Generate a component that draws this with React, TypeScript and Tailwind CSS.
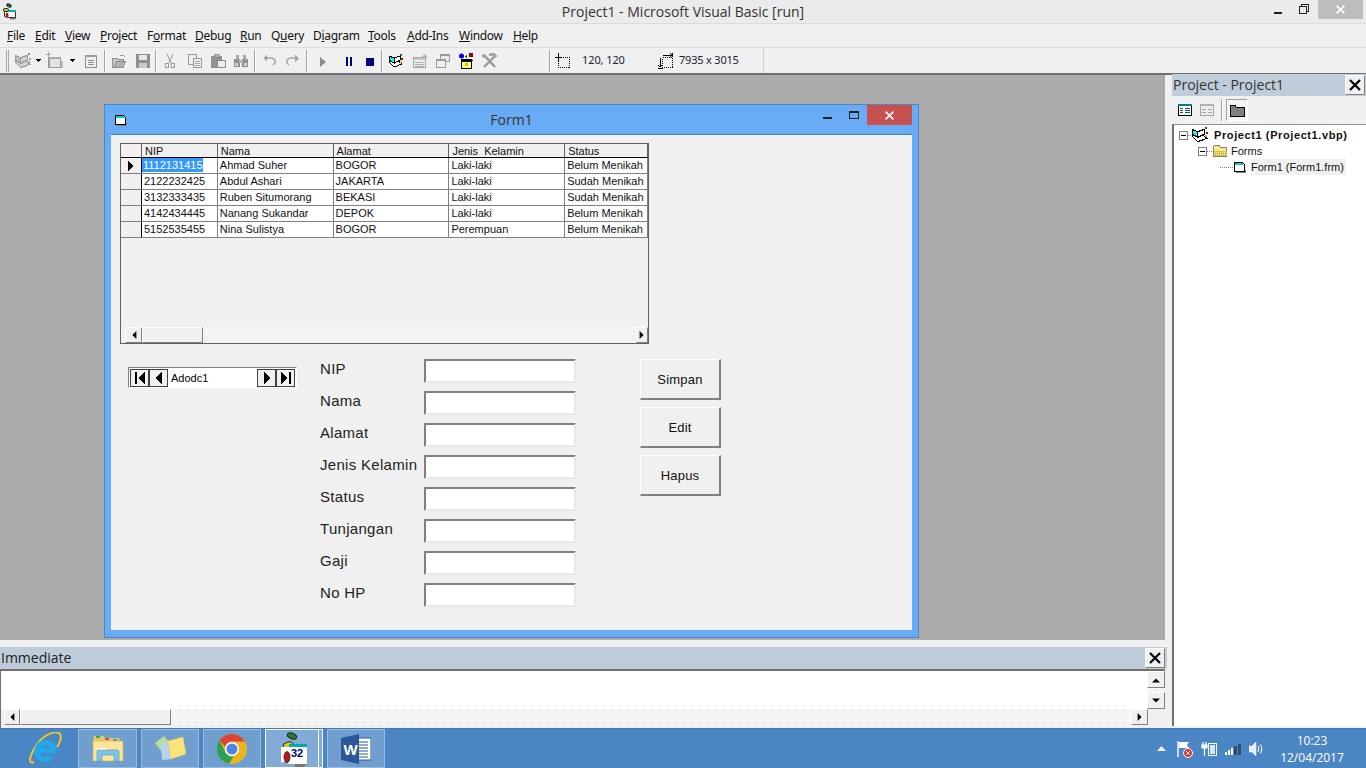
import type { ReactNode } from "react";

const menus = [
  { pre: "", u: "F", post: "ile", w: "w-[28px]" },
  { pre: "", u: "E", post: "dit", w: "w-[30px]" },
  { pre: "", u: "V", post: "iew", w: "w-[35px]" },
  { pre: "", u: "P", post: "roject", w: "w-[47px]" },
  { pre: "F", u: "o", post: "rmat", w: "w-[48px]" },
  { pre: "", u: "D", post: "ebug", w: "w-[45px]" },
  { pre: "", u: "R", post: "un", w: "w-[31px]" },
  { pre: "Q", u: "u", post: "ery", w: "w-[42px]" },
  { pre: "D", u: "i", post: "agram", w: "w-[55px]" },
  { pre: "", u: "T", post: "ools", w: "w-[39px]" },
  { pre: "", u: "A", post: "dd-Ins", w: "w-[52px]" },
  { pre: "", u: "W", post: "indow", w: "w-[54px]" },
  { pre: "", u: "H", post: "elp", w: "w-[40px]" },
];

const rows = [
  ["1112131415", "Ahmad Suher", "BOGOR", "Laki-laki", "Belum Menikah"],
  ["2122232425", "Abdul Ashari", "JAKARTA", "Laki-laki", "Sudah Menikah"],
  ["3132333435", "Ruben Situmorang", "BEKASI", "Laki-laki", "Sudah Menikah"],
  ["4142434445", "Nanang Sukandar", "DEPOK", "Laki-laki", "Belum Menikah"],
  ["5152535455", "Nina Sulistya", "BOGOR", "Perempuan", "Belum Menikah"],
];

const heads = ["NIP", "Nama", "Alamat", "Jenis  Kelamin", "Status"];
const colW = ["w-[76px]", "w-[116px]", "w-[116px]", "w-[116px]", "w-[83px]"];
const labels = ["NIP", "Nama", "Alamat", "Jenis Kelamin", "Status", "Tunjangan", "Gaji", "No HP"];

const raised = "border border-t-white border-l-white border-r-[#808080] border-b-[#808080] bg-[#f0f0f0]";
const dither = "bg-[repeating-conic-gradient(#ffffff_0_25%,#ececec_0_50%)] bg-[length:2px_2px]";

// --- small drawings ---
function Px({ children, size = 16, box = 16 }: { children: ReactNode; size?: number; box?: number }) {
  return (
    <svg width={size} height={size} viewBox={`0 0 ${box} ${box}`} className="block shrink-0" shapeRendering="crispEdges">
      {children}
    </svg>
  );
}

function ProjectIcon({ gray = false, size = 16 }: { gray?: boolean; size?: number }) {
  const k = gray ? "#9a9a9a" : "#000";
  return (
    <Px size={size}>
      <path d="M1 9l5 5 8-3-5-4z" fill={gray ? "#d0d0d0" : "#fff"} stroke={k} />
      <path d="M1 3l5 2v5l-5-3z" fill={gray ? "#bdbdbd" : "#0ff"} stroke={k} />
      <path d="M6 5l6-2v4l-6 3z" fill={gray ? "#d0d0d0" : "#fff"} stroke={k} />
      <rect x="12" y="1" width="2" height="2" fill={gray ? "#8a8a8a" : "#008000"} />
      <rect x="13" y="5" width="2" height="2" fill={gray ? "#a0a0a0" : "#d00000"} />
      <rect x="12" y="8" width="2" height="2" fill={gray ? "#a0a0a0" : "#e0c000"} />
    </Px>
  );
}

// little copy of the VB "32" program icon, used in the window title
function AppIcon() {
  return (
    <svg width="16" height="17" viewBox="0 0 16 17" className="block shrink-0">
      <ellipse cx="7" cy="2.500" rx="2.500" ry="1.500" fill="#2f7a2f" stroke="#000" strokeWidth="0.8" transform="rotate(25 7 2.500)" />
      <ellipse cx="4" cy="7" rx="2.800" ry="1.600" fill="#d8d020" stroke="#000" strokeWidth="0.8" />
      <path d="M2.500 8.500h11v6h-8l-3-1z" fill="#fff" stroke="#000" strokeWidth="0.8" />
      <rect x="6" y="7" width="8" height="2" fill="#00b0b0" />
      <ellipse cx="5" cy="12" rx="1.500" ry="2.500" fill="#c01818" />
      <path d="M8 15h7l-2 1.500H8z" fill="#808080" />
    </svg>
  );
}

function AddFormIcon() {
  return (
    <Px size={18}>
      <rect x="3.500" y="4.500" width="10" height="9" fill="#e4e4e4" stroke="#9a9a9a" />
      <rect x="3" y="4" width="11" height="2" fill="#a9a9a9" />
      <path d="M3 0v4M1 2h4" stroke="#a5a5a5" />
      <path d="M14 8h2v6h-2z" fill="#bcbcbc" />
    </Px>
  );
}

function MenuEditorIcon() {
  return (
    <Px>
      <rect x="2.500" y="2.500" width="11" height="12" fill="#eeeeee" stroke="#8f8f8f" />
      <rect x="2" y="2" width="12" height="2" fill="#9b9b9b" />
      <path d="M5 7h6M5 9h6M5 11h6" stroke="#8f8f8f" />
    </Px>
  );
}

function OpenIcon() {
  return (
    <Px>
      <path d="M1 5h5l1 1h5v8H1z" fill="#c6c6c6" stroke="#8f8f8f" />
      <path d="M3 14l3-6h9l-3 6z" fill="#b0b0b0" stroke="#8f8f8f" />
      <path d="M9 3q3-2 5 1" fill="none" stroke="#9b9b9b" />
    </Px>
  );
}

function SaveIcon() {
  return (
    <Px>
      <rect x="1" y="1" width="14" height="14" fill="#8f8f8f" />
      <rect x="4" y="2" width="8" height="5" fill="#e9e9e9" />
      <rect x="4" y="10" width="8" height="5" fill="#c9c9c9" />
    </Px>
  );
}

function CutIcon() {
  return (
    <Px>
      <path d="M5 1l4 9M11 1l-4 9" stroke="#9a9a9a" fill="none" shapeRendering="auto" />
      <circle cx="5" cy="12.500" r="2" fill="none" stroke="#9a9a9a" />
      <circle cx="11" cy="12.500" r="2" fill="none" stroke="#9a9a9a" />
    </Px>
  );
}

function CopyIcon() {
  return (
    <Px>
      <rect x="1.500" y="1.500" width="8" height="10" fill="#efefef" stroke="#9a9a9a" />
      <rect x="6.500" y="5.500" width="8" height="9" fill="#efefef" stroke="#9a9a9a" />
      <path d="M8 8h5M8 10h5M8 12h5" stroke="#a8a8a8" />
    </Px>
  );
}

function PasteIcon() {
  return (
    <Px>
      <rect x="1" y="3" width="11" height="12" fill="#929292" />
      <rect x="4" y="1" width="5" height="3" fill="#b5b5b5" stroke="#808080" strokeWidth="0.6" />
      <rect x="7.500" y="7.500" width="8" height="7" fill="#efefef" stroke="#8a8a8a" />
    </Px>
  );
}

function FindIcon() {
  return (
    <Px>
      <rect x="1" y="6" width="6" height="8" fill="#8f8f8f" />
      <rect x="9" y="6" width="6" height="8" fill="#8f8f8f" />
      <rect x="3" y="2" width="3" height="5" fill="#a5a5a5" />
      <rect x="10" y="2" width="3" height="5" fill="#a5a5a5" />
      <rect x="6" y="7" width="4" height="3" fill="#b5b5b5" />
      <rect x="2" y="10" width="3" height="3" fill="#d4d4d4" />
      <rect x="11" y="10" width="3" height="3" fill="#d4d4d4" />
    </Px>
  );
}

function UndoIcon({ flip = false }: { flip?: boolean }) {
  return (
    <Px>
      <g transform={flip ? "translate(16 0) scale(-1 1)" : undefined}>
        <path d="M4 5h7l3 2v3l-2 2" fill="none" stroke="#a5a5a5" strokeWidth="1.500" shapeRendering="auto" />
        <path d="M2 5l4-3v7z" fill="#a5a5a5" />
      </g>
    </Px>
  );
}

function PropsIcon() {
  return (
    <Px>
      <rect x="1.500" y="4.500" width="12" height="10" fill="#eeeeee" stroke="#a5a5a5" />
      <rect x="2" y="5" width="11" height="2" fill="#c6c6c6" />
      <path d="M3 9h9M3 11h9M3 13h9" stroke="#b0b0b0" />
      <path d="M10 3l4-2 1 4-3 1z" fill="#b5b5b5" />
    </Px>
  );
}

function LayoutIcon() {
  return (
    <Px>
      <rect x="5.500" y="1.500" width="9" height="7" fill="#e9e9e9" stroke="#9a9a9a" />
      <rect x="5" y="1" width="10" height="2" fill="#9a9a9a" />
      <rect x="1.500" y="6.500" width="9" height="8" fill="#f0f0f0" stroke="#9a9a9a" />
      <rect x="1" y="6" width="10" height="2" fill="#9a9a9a" />
    </Px>
  );
}

function BrowserIcon() {
  return (
    <Px>
      <circle cx="3.500" cy="3" r="2.500" fill="#0000e0" shapeRendering="auto" />
      <rect x="11" y="0" width="4" height="4" fill="#a00000" />
      <path d="M6 3l3-1v3z" fill="#006000" />
      <path d="M2 7l4 2h8l1-2-2-1H4z" fill="#000" />
      <rect x="3.500" y="8.500" width="10" height="7" fill="#ffff80" stroke="#000" />
      <path d="M7 10h3v3H7z" fill="#d8c000" />
    </Px>
  );
}

function ToolsIcon() {
  return (
    <Px>
      <path d="M3 2l11 12" stroke="#9a9a9a" strokeWidth="2.400" shapeRendering="auto" />
      <path d="M13 4L3 14" stroke="#9a9a9a" strokeWidth="2.400" shapeRendering="auto" />
      <path d="M8 0h5l3 3-2 3-3-3H8z" fill="#a5a5a5" />
      <path d="M0 3l3-3 2 3-2 2z" fill="#a5a5a5" />
    </Px>
  );
}

function PositionIcon() {
  return (
    <Px>
      <path d="M3 0v8M0 4h7" stroke="#000" />
      <rect x="3.500" y="4.500" width="11" height="10" fill="none" stroke="#000" strokeDasharray="1 1" />
    </Px>
  );
}

function SizeIcon() {
  return (
    <Px>
      <rect x="4.500" y="4.500" width="10" height="10" fill="none" stroke="#000" strokeDasharray="1 1" />
      <path d="M5 2h9M12 0l2 2-2 2M14 0v4" stroke="#000" fill="none" />
      <path d="M2 5v9M0 12l2 2 2-2M0 15h5" stroke="#000" fill="none" />
    </Px>
  );
}

function SmallFormIcon() {
  return (
    <Px size={14} box={14}>
      <rect x="3" y="10" width="10" height="3" fill="#808080" />
      <path d="M1.500 2.500h8l2 2v7h-10z" fill="#fff" stroke="#000" />
      <rect x="2" y="3" width="8" height="2" fill="#00d0d0" />
    </Px>
  );
}

function FolderIcon() {
  return (
    <Px>
      <path d="M1 4l2-2h4l1 2h6v9H1z" fill="#ffe98a" stroke="#808080" />
      <path d="M1.500 8h13v5h-13z" fill="#d8c050" />
      <path d="M2 9h12M2 11h12" stroke="#fff6b0" strokeDasharray="1 1" />
    </Px>
  );
}

function Arrow({ dir, size = 5 }: { dir: "l" | "r" | "u" | "d"; size?: number }) {
  const d = { l: "M8 0v10L3 5z", r: "M2 0v10l5-5z", u: "M0 8h10L5 3z", d: "M0 2h10L5 7z" }[dir];
  return (
    <svg width={size * 2} height={size * 2} viewBox="0 0 10 10" className="block">
      <path d={d} fill="#000" />
    </svg>
  );
}

function CloseGlyph({ color = "#000", size = 14, sw = 2.2 }: { color?: string; size?: number; sw?: number }) {
  return (
    <svg width={size} height={size} viewBox="0 0 14 14" className="block">
      <path d="M2 2l10 10M12 2L2 12" stroke={color} strokeWidth={sw} />
    </svg>
  );
}

function Slot({ children, w = "w-[23px]" }: { children?: ReactNode; w?: string }) {
  return <div className={`${w} h-[26px] shrink-0 flex items-center justify-center`}>{children}</div>;
}

function Sep({ ml }: { ml: string }) {
  return <div className={`${ml} w-[2px] h-[22px] shrink-0 border-l border-l-[#a0a0a0] border-r border-r-white`} />;
}

function DropArrow() {
  return (
    <svg width="5" height="3" viewBox="0 0 5 3" className="block" shapeRendering="crispEdges">
      <path d="M0 0h5v1H4v1H3v1H2V2H1V1H0z" fill="#000" />
    </svg>
  );
}

function PanelClose() {
  return (
    <div className={`w-[20px] h-[20px] ${raised} flex items-center justify-center`}>
      <CloseGlyph />
    </div>
  );
}

function ScrollBtn({ dir, className = "" }: { dir: "l" | "r" | "u" | "d"; className?: string }) {
  return (
    <div className={`${raised} shrink-0 flex items-center justify-center ${className}`}>
      <Arrow dir={dir} size={4} />
    </div>
  );
}

function NavBtn({ kind }: { kind: "first" | "prev" | "next" | "last" }) {
  const d = {
    first: "M1 0h2v12H1zM11 0v12L4 6z",
    prev: "M9 0v12L2 6z",
    next: "M3 0v12l7-6z",
    last: "M9 0h2v12H9zM1 0v12l7-6z",
  }[kind];
  return (
    <div className="w-[19px] h-[18px] bg-[#f0f0f0] border border-[#404040] shrink-0 flex items-center justify-center">
      <svg width="12" height="12" viewBox="0 0 12 12" className="block" shapeRendering="crispEdges">
        <path d={d} fill="#000" />
      </svg>
    </div>
  );
}

function DataGrid() {
  return (
    <div className="w-[529px] h-[201px] border border-[#606060] flex flex-col relative text-[11px] text-[#111]">
      <div className="flex h-[14px] border-b border-b-black">
        <div className="w-[21px] border-r border-r-[#606060]" />
        {heads.map((h, i) => (
          <div key={h} className={`${colW[i]} border-r border-r-[#606060] pl-[3px] leading-[15px] whitespace-pre overflow-hidden`}>
            {h}
          </div>
        ))}
      </div>
      {rows.map((r, ri) => (
        <div key={r[0]} className="flex h-[16px] border-b border-b-[#808080]">
          <div className="w-[21px] border-r border-r-black flex items-center justify-center">
            {ri === 0 && (
              <svg width="8" height="10" viewBox="0 0 8 10" className="block" shapeRendering="crispEdges">
                <path d="M1 0l6 5-6 5z" fill="#000" />
              </svg>
            )}
          </div>
          {r.map((c, ci) => (
            <div
              key={ci}
              className={`${colW[ci]} bg-white border-r border-r-[#808080] pl-[2px] leading-[14px] whitespace-nowrap overflow-hidden`}
            >
              {ri === 0 && ci === 0 ? (
                <span className="block -ml-[2px] w-[61px] pl-[1px] bg-[#3399ff] text-white">{c}</span>
              ) : (
                c
              )}
            </div>
          ))}
        </div>
      ))}
      <div className="mt-auto h-[16px] flex items-stretch pl-[4px]">
        <ScrollBtn dir="l" className="w-[17px]" />
        <div className={`w-[61px] ${raised}`} />
        <div className={`flex-1 ${dither}`} />
        <ScrollBtn dir="r" className="w-[12px]" />
      </div>
    </div>
  );
}

function VbForm() {
  return (
    <div className="w-[815px] h-[534px] bg-[#6aabf5] border border-[#4a86c8] flex flex-col shrink-0">
      <div className="h-[29px] flex items-center relative shrink-0">
        <div className="pl-[9px]">
          <SmallFormIcon />
        </div>
        <div className="absolute left-0 right-0 top-[4px] text-center text-[14px] text-[#333] font-['Open_Sans',sans-serif]">
          Form1
        </div>
        <div className="ml-auto flex items-start self-start mr-[6px]">
          <div className="w-[9px] h-[2px] bg-[#222] mt-[12px] mr-[17px]" />
          <div className="w-[10px] h-[8px] border border-[#222] border-t-2 mt-[6px] mr-[8px]" />
          <div className="w-[45px] h-[20px] bg-[#c75050] flex items-center justify-center">
            <CloseGlyph color="#fff" size={11} sw={2} />
          </div>
        </div>
      </div>
      <div className="mx-[6px] mb-[7px] flex-1 bg-[#f0f0f0] pl-[9px] pt-[8px] border-t border-t-[#4a86c8]">
        <DataGrid />
        <div className="flex mt-[15px]">
          <div className="ml-[8px] mt-[8px] w-[169px] h-[21px] border border-[#808080] border-r-white border-b-white p-px flex self-start shrink-0 bg-white">
            <NavBtn kind="first" />
            <NavBtn kind="prev" />
            <div className="flex-1 bg-white text-[11px] leading-[18px] pl-[3px]">Adodc1</div>
            <NavBtn kind="next" />
            <NavBtn kind="last" />
          </div>
          <div className="ml-[23px] flex flex-col gap-[8px] w-[256px]">
            {labels.map((l) => (
              <div key={l} className="flex h-[24px]">
                <div className="w-[104px] text-[15px] tracking-[0.3px] leading-[20px] text-[#222]">{l}</div>
                <div className="w-[152px] bg-white border-2 border-t-[#808080] border-l-[#808080] border-r-[#e8e8e8] border-b-[#e8e8e8]" />
              </div>
            ))}
          </div>
          <div className="ml-[64px] flex flex-col gap-[7px]">
            {["Simpan", "Edit", "Hapus"].map((b) => (
              <div
                key={b}
                className="w-[81px] h-[41px] pt-[1px] border border-t-white border-l-white border-r-2 border-b-2 border-r-[#808080] border-b-[#808080] text-[13px] tracking-[0.2px] text-[#111] flex items-center justify-center"
              >
                {b}
              </div>
            ))}
          </div>
        </div>
      </div>
    </div>
  );
}

function ImmediatePane() {
  return (
    <div className="h-[88px] shrink-0 bg-[#f0f0f0] pt-[7px] flex flex-col">
      <div className="h-[22px] bg-[#bfcddb] flex items-center shrink-0 w-[1167px]">
        <div className="pl-[1px] pb-[2px] text-[14px] text-[#222] font-['Open_Sans',sans-serif]">Immediate</div>
        <div className="ml-auto mr-[2px]">
          <PanelClose />
        </div>
      </div>
      <div className="flex-1 flex flex-col w-[1165px] border-t-2 border-t-[#707070] border-l border-l-[#707070]">
        <div className="flex h-[38px] bg-white">
          <div className="flex-1" />
          <div className={`w-[18px] flex flex-col justify-between ${dither}`}>
            <ScrollBtn dir="u" className="h-[17px]" />
            <ScrollBtn dir="d" className="h-[17px]" />
          </div>
        </div>
        <div className="h-[16px] flex pl-[3px] pr-[17px]">
          <ScrollBtn dir="l" className="w-[16px]" />
          <div className={`w-[151px] ${raised}`} />
          <div className={`flex-1 ${dither}`} />
          <ScrollBtn dir="r" className="w-[17px]" />
        </div>
      </div>
    </div>
  );
}

function TreeBox() {
  return (
    <div className="w-[9px] h-[9px] border border-[#808080] bg-white flex items-center justify-center shrink-0">
      <div className="w-[5px] h-px bg-black" />
    </div>
  );
}

function ProjectPane() {
  return (
    <div className="w-[194px] shrink-0 flex flex-col -ml-[1px] -mt-[1px]">
      <div className="h-[22px] bg-[#bfcddb] flex items-center shrink-0">
        <div className="pl-[1px] pb-[2px] text-[14px] text-[#333] font-['Open_Sans',sans-serif]">Project - Project1</div>
        <div className="ml-auto mr-[1px]">
          <PanelClose />
        </div>
      </div>
      <div className="h-[28px] flex items-center pl-[3px] shrink-0 bg-[#f0f0f0]">
        <div className="w-[19px] flex justify-center">
          <Px>
            <rect x="1.500" y="2.500" width="13" height="11" fill="#fff" stroke="#000" />
            <rect x="1" y="2" width="14" height="2" fill="#008080" />
            <path d="M3 6h3M3 8h3M3 10h3M8 6h5M8 8h5M8 10h5" stroke="#006060" />
          </Px>
        </div>
        <div className="w-[19px] ml-[3px] flex justify-center">
          <Px>
            <rect x="1.500" y="2.500" width="13" height="11" fill="#ececec" stroke="#a5a5a5" />
            <rect x="1" y="2" width="14" height="2" fill="#b0b0b0" />
            <path d="M3 7h4M3 10h4M9 7h4M9 10h4" stroke="#a5a5a5" />
          </Px>
        </div>
        <div className="w-[2px] h-[22px] ml-[5px] border-l border-l-[#a0a0a0] border-r border-r-white" />
        <div className={`w-[22px] h-[22px] ml-[3px] flex items-center justify-center border border-t-[#a0a0a0] border-l-[#a0a0a0] border-r-white border-b-white ${dither}`}>
          <Px>
            <path d="M1 3h5l1 2h8v9H1z" fill="#808080" stroke="#000" />
          </Px>
        </div>
      </div>
      <div className="flex-1 mb-[2px] bg-white border-l-2 border-l-[#707070] border-t border-t-[#909090] pt-[2px] text-[#111]">
        <div className="h-[16px] flex items-center pl-[5px]">
          <TreeBox />
          <div className="w-[3px] border-t border-dotted border-t-[#808080]" />
          <ProjectIcon size={18} />
          <span className="ml-[5px] font-bold text-[11px] tracking-[0.6px] whitespace-nowrap">
            Project1 (Project1.vbp)
          </span>
        </div>
        <div className="h-[16px] flex items-center pl-[24px]">
          <TreeBox />
          <div className="w-[5px] border-t border-dotted border-t-[#808080]" />
          <FolderIcon />
          <span className="ml-[3px] text-[11px]">Forms</span>
        </div>
        <div className="h-[16px] flex items-center pl-[46px]">
          <div className="w-[13px] border-t border-dotted border-t-[#808080]" />
          <SmallFormIcon />
          <span className="ml-[4px] text-[11px] bg-[#f0f0f0] pr-[2px] whitespace-nowrap">Form1 (Form1.frm)</span>
        </div>
      </div>
    </div>
  );
}

function IeIcon() {
  return (
    <svg width="34" height="34" viewBox="0 0 34 34" className="block">
      <path d="M6 30C-1 33 2 22 10 11 17 2 28-2 32 2c2 3 0 9-3 13" fill="none" stroke="#eec22c" strokeWidth="2" />
      <path d="M9 18.500h17a8.500 8.500 0 1 0-3 7" fill="none" stroke="#1fa9e8" strokeWidth="5" />
    </svg>
  );
}

function ExplorerIcon() {
  return (
    <svg width="32" height="30" viewBox="0 0 32 30" className="block">
      <path d="M1 5l1-3h9l2 2h14l1 3H1z" fill="#e8c860" />
      <rect x="4" y="2" width="4" height="2" fill="#2eb050" />
      <rect x="13" y="4" width="4" height="2" fill="#e05040" />
      <rect x="21" y="5" width="4" height="2" fill="#30a0e0" />
      <path d="M1 7h30v20H1z" fill="#fbe49c" stroke="#d4b050" strokeWidth="0.6" />
      <path d="M5 27V18q0-2 2-2h18q2 0 2 2v9h-5v-6H10v6z" fill="#7dc6e8" stroke="#4a96c4" strokeWidth="0.6" />
      <rect x="3" y="14" width="12" height="1.500" fill="#fff" opacity="0.8" />
    </svg>
  );
}

function NotesIcon() {
  return (
    <svg width="32" height="28" viewBox="0 0 32 28" className="block">
      <path d="M1 8l9-7 7 9-9 7z" fill="#b6dfa0" stroke="#9cc98a" strokeWidth="0.5" />
      <path d="M7 9l10-2 2 17-11 1z" fill="#b6d4ee" />
      <path d="M14 6l15-4 3 17-15 5z" fill="#ffe37a" stroke="#e8c85a" strokeWidth="0.5" />
    </svg>
  );
}

function ChromeIcon() {
  return (
    <svg width="30" height="30" viewBox="0 0 30 30" className="block">
      <circle cx="15" cy="15" r="15" fill="#e8b520" />
      <path d="M15 0a15 15 0 0 1 13 7.500H15a7.500 7.500 0 0 0-7 5L2.500 6.500A15 15 0 0 1 15 0z" fill="#dc4437" />
      <path d="M2.500 6.500L8.500 18.500a7.500 7.500 0 0 0 8 4l-4.500 7.200A15 15 0 0 1 2.500 6.500z" fill="#2e9e55" />
      <circle cx="15" cy="15" r="7" fill="#fff" />
      <circle cx="15" cy="15" r="5.500" fill="#4a86e8" />
    </svg>
  );
}

function Vb32Icon() {
  return (
    <div className="w-[34px] h-[36px] relative">
      <svg width="34" height="36" viewBox="0 0 34 36" className="block">
        <ellipse cx="17" cy="5" rx="5" ry="2.800" fill="#2f7a2f" stroke="#000" strokeWidth="0.7" transform="rotate(20 17 5)" />
        <ellipse cx="13" cy="14" rx="5" ry="2.800" fill="#d8d020" stroke="#000" strokeWidth="0.7" transform="rotate(-15 13 14)" />
        <path d="M20 33h12l-5 4H20z" fill="#777" />
        <path d="M6 16h26v17H14l-4-3-4 2z" fill="#fff" />
        <rect x="14" y="13" width="18" height="3" fill="#0aa" />
        <ellipse cx="12" cy="26" rx="3" ry="5.500" fill="#c01818" stroke="#000" strokeWidth="0.6" />
      </svg>
      <span className="absolute left-[16px] top-[17px] text-[11px] leading-[11px] font-bold text-[#000080]">32</span>
    </div>
  );
}

function WordIcon() {
  return (
    <svg width="30" height="30" viewBox="0 0 30 30" className="block">
      <rect x="14" y="4" width="16" height="22" fill="#fff" stroke="#2b579a" />
      <path d="M17 8h10M17 11h10M17 14h10M17 17h10M17 20h10M17 23h10" stroke="#2b579a" />
      <path d="M0 4l18-4v30L0 26z" fill="#2b579a" />
      <text x="2.500" y="21" fontSize="15" fontWeight="700" fill="#fff" fontFamily="Liberation Sans, sans-serif">W</text>
    </svg>
  );
}

function TaskBtn({ children, w = "w-[59px]", active = false }: { children: ReactNode; w?: string; active?: boolean }) {
  return (
    <div
      className={`${w} h-[39px] shrink-0 flex items-center justify-center border ${
        active ? "bg-white/30 border-white" : "bg-white/20 border-white/30"
      }`}
    >
      {children}
    </div>
  );
}

function Tray() {
  return (
    <div className="ml-auto flex items-center text-white h-[40px]">
      <svg width="9" height="5" viewBox="0 0 9 5" className="block mr-[11px]">
        <path d="M0 5l4.500-5L9 5z" fill="#f0f0f0" />
      </svg>
      <svg width="16" height="18" viewBox="0 0 16 18" className="block mr-[8px]">
        <path d="M1 1v16" stroke="#fff" strokeWidth="1.400" />
        <path d="M2 2h10l-2 3 2 3H2z" fill="#fff" />
        <circle cx="11" cy="13" r="4.500" fill="#e03030" stroke="#fff" />
        <path d="M9 11l4 4M13 11l-4 4" stroke="#fff" />
      </svg>
      <svg width="16" height="16" viewBox="0 0 16 16" className="block mr-[8px]">
        <rect x="7.500" y="2.500" width="8" height="12" fill="none" stroke="#fff" />
        <rect x="9" y="4" width="5" height="9" fill="#d8e8f5" />
        <path d="M2 1v3M5 1v3M1 4h5v3H1zM3.500 7v8" stroke="#fff" strokeWidth="1.200" fill="#fff" />
      </svg>
      <svg width="16" height="12" viewBox="0 0 16 12" className="block mr-[8px]" shapeRendering="crispEdges">
        <rect x="0" y="9" width="2" height="3" fill="#fff" />
        <rect x="3" y="7" width="2" height="5" fill="#fff" />
        <rect x="6" y="5" width="2" height="7" fill="#fff" />
        <rect x="9" y="3" width="3" height="9" fill="#2e4f72" />
        <rect x="13" y="1" width="3" height="11" fill="#2e4f72" />
      </svg>
      <svg width="16" height="14" viewBox="0 0 16 14" className="block">
        <path d="M0 4h3l4-4v14l-4-4H0z" fill="#e8eef5" stroke="#fff" strokeWidth="0.5" />
        <path d="M9 4q2 3 0 6M11.500 2.500q3 4.500 0 9" fill="none" stroke="#fff" />
      </svg>
      <div className="w-[96px] ml-[-2px] text-center text-[12px] leading-[17px] font-['Open_Sans',sans-serif] pl-[2px]">
        <div>10:23</div>
        <div>12/04/2017</div>
      </div>
    </div>
  );
}

export default function App() {
  return (
    <div className="w-[1366px] h-[768px] overflow-hidden flex flex-col bg-[#f0f0f0] font-['Liberation_Sans',sans-serif]">
      {/* window title */}
      <div className="h-[23px] shrink-0 bg-[#ebebeb] flex items-center relative">
        <div className="pl-[2px]">
          <AppIcon />
        </div>
        <div className="absolute inset-x-0 top-[2px] text-center text-[14px] leading-[20px] text-[#333] font-['Open_Sans',sans-serif]">
          Project1 - Microsoft Visual Basic [run]
        </div>
        <div className="ml-auto flex items-start self-start mr-[3px]">
          <div className="w-[8px] h-[2px] bg-[#222] mr-[17px] mt-[12px]" />
          <div className="relative w-[10px] h-[10px] mr-[9px] mt-[4px]">
            <div className="absolute right-0 top-0 w-[8px] h-[8px] border border-[#222]" />
            <div className="absolute left-0 bottom-0 w-[8px] h-[8px] border border-[#222] bg-[#ebebeb]" />
          </div>
          <div className="w-[45px] h-[19px] bg-[#bdbdbd] flex items-center justify-center">
            <CloseGlyph color="#fff" size={11} sw={2} />
          </div>
        </div>
      </div>

      {/* menu */}
      <div className="h-[24px] shrink-0 border-t border-t-[#dcdcdc] flex items-center pl-[7px] text-[12px] tracking-[-0.3px] text-[#111] font-['Noto_Sans',sans-serif]">
        {menus.map((m) => (
          <div key={m.u + m.post} className={`${m.w} shrink-0`}>
            {m.pre}
            <span className="underline">{m.u}</span>
            {m.post}
          </div>
        ))}
      </div>

      {/* toolbar */}
      <div className="h-[26px] shrink-0 flex items-center pl-[5px] border-t border-t-[#dcdcdc]">
        <div className="w-[6px] h-[22px] flex gap-px shrink-0 pl-px">
          <div className="w-px bg-[#a8a8a8]" />
          <div className="w-px bg-[#a8a8a8]" />
        </div>
        <Slot><ProjectIcon gray size={18} /></Slot>
        <Slot w="w-[8px]"><DropArrow /></Slot>
        <Slot><AddFormIcon /></Slot>
        <Slot w="w-[14px]"><DropArrow /></Slot>
        <Slot><MenuEditorIcon /></Slot>
        <Sep ml="ml-[2px]" />
        <Slot w="w-[25px]"><OpenIcon /></Slot>
        <Slot><SaveIcon /></Slot>
        <Sep ml="ml-px" />
        <Slot w="w-[26px]"><CutIcon /></Slot>
        <Slot><CopyIcon /></Slot>
        <Slot><PasteIcon /></Slot>
        <Slot><FindIcon /></Slot>
        <Sep ml="ml-[2px]" />
        <Slot w="w-[25px]"><UndoIcon /></Slot>
        <Slot><UndoIcon flip /></Slot>
        <Sep ml="ml-[2px]" />
        <Slot w="w-[29px]">
          <svg width="6" height="10" viewBox="0 0 6 10" className="block mt-[2px]"><path d="M0 0l6 5-6 5z" fill="#8a8a8a" /></svg>
        </Slot>
        <Slot>
          <div className="flex gap-[2px] mt-[2px]">
            <div className="w-[2px] h-[9px] bg-[#000080]" />
            <div className="w-[2px] h-[9px] bg-[#000080]" />
          </div>
        </Slot>
        <Slot w="w-[20px]"><div className="w-[8px] h-[8px] mt-[2px] bg-[#000080]" /></Slot>
        <Sep ml="ml-px" />
        <Slot w="w-[25px]"><ProjectIcon /></Slot>
        <Slot><PropsIcon /></Slot>
        <Slot><LayoutIcon /></Slot>
        <Slot><BrowserIcon /></Slot>
        <Slot><ToolsIcon /></Slot>
        <Sep ml="ml-[49px]" />
        <div className="ml-[4px] w-[16px] shrink-0"><PositionIcon /></div>
        <div className="ml-[11px] w-[76px] text-[11px] tracking-[-0.1px] text-[#1a2330] shrink-0 font-['Noto_Sans',sans-serif]">120, 120</div>
        <div className="w-[16px] shrink-0"><SizeIcon /></div>
        <div className="ml-[5px] w-[84px] text-[11px] tracking-[-0.2px] text-[#1a2330] shrink-0 font-['Noto_Sans',sans-serif] whitespace-nowrap">7935 x 3015</div>
        <div className="w-px h-[26px] bg-[#cfcfcf] shrink-0" />
      </div>

      {/* workspace */}
      <div className="flex-1 min-h-0 flex border-t-2 border-t-[#6f6f6f]">
        <div className="w-[1173px] shrink-0 flex flex-col">
          <div className="flex-1 min-h-0 flex">
            <div className="w-[1165px] bg-[#ababab] pl-[104px] pt-[29px] overflow-hidden">
              <VbForm />
            </div>
            <div className="flex-1 bg-[#f0f0f0]" />
          </div>
          <ImmediatePane />
        </div>
        <ProjectPane />
      </div>

      {/* taskbar */}
      <div className="h-[40px] shrink-0 bg-[#4b86c4] border-t border-t-[#3f79b8] flex items-center gap-[4px] pr-[7px]">
        <div className="w-[74px] shrink-0 flex justify-center pl-[16px]">
          <IeIcon />
        </div>
        <TaskBtn><ExplorerIcon /></TaskBtn>
        <TaskBtn w="w-[58px]"><NotesIcon /></TaskBtn>
        <TaskBtn w="w-[58px]"><ChromeIcon /></TaskBtn>
        <div className="flex w-[58px] shrink-0">
          <TaskBtn w="w-[54px]" active><Vb32Icon /></TaskBtn>
          <div className="w-[4px] h-[39px] bg-white/30 border-r border-y border-white" />
        </div>
        <TaskBtn w="w-[58px]"><WordIcon /></TaskBtn>
        <Tray />
      </div>
    </div>
  );
}
